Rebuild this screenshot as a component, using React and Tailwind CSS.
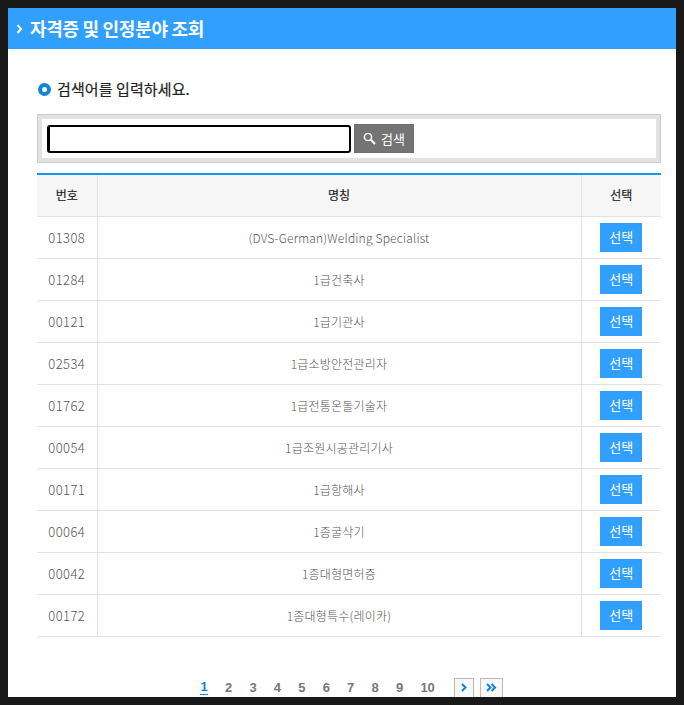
const rows = [
  ["01308", "(DVS-German)Welding Specialist"],
  ["01284", "1급건축사"],
  ["00121", "1급기관사"],
  ["02534", "1급소방안전관리자"],
  ["01762", "1급전통온돌기술자"],
  ["00054", "1급조원시공관리기사"],
  ["00171", "1급항해사"],
  ["00064", "1종굴삭기"],
  ["00042", "1종대형면허증"],
  ["00172", "1종대형특수(레이카)"],
];
const pages = ["2", "3", "4", "5", "6", "7", "8", "9", "10"];

export default function App() {
  return (
    <div className="h-[705px] overflow-hidden bg-[#191919] p-2 [font-family:'Noto_Sans_CJK_KR','Noto_Sans',sans-serif]">
      <div className="h-[689px] overflow-hidden bg-white">
        <div className="flex h-[41px] items-center gap-[7px] bg-[#319ffe] pl-[8px] text-white">
          <svg width="7" height="10" viewBox="0 0 7 10" fill="none" stroke="white" strokeWidth="2"><path d="M1.5 1l3.5 4-3.5 4" /></svg>
          <h1 className="-mt-[2px] text-[18px] leading-none font-bold tracking-[-0.3px]">자격증 및 인정분야 조회</h1>
        </div>
        <div className="pt-[29px] pr-[15px] pl-[29px]">
          <div className="flex h-[22px] items-center gap-[6px] pl-[1px]">
            <span className="h-[13px] w-[13px] rounded-full border-[4px] border-[#0f86d9] bg-white" />
            <span className="-mt-[2px] text-[15px] leading-none tracking-[0.1px] text-[#222] [-webkit-text-stroke:0.2px_#222]">검색어를 입력하세요.</span>
          </div>
          <div className="mt-[14px] h-[49px] border border-[#cccccc] bg-white">
            <div className="h-full border-[4px] border-[#e2e2e2] bg-white pt-[5px] pl-[5px]">
              <div className="flex items-start gap-[3px]">
                <input aria-label="검색어" className="mt-[1px] h-[28px] w-[304px] rounded-[3px] border-2 border-l-[3px] border-black bg-white outline-none" />
                <button className="flex h-[29px] w-[60px] items-center justify-center gap-[5px] border border-[#6f6f6f] bg-[#747474] text-[13px] text-white">
                  <svg width="13" height="13" viewBox="0 0 13 13" fill="none" stroke="white" strokeWidth="1.5"><circle cx="5" cy="5" r="3.6" /><path d="M7.8 7.8L12 12" strokeWidth="2" /></svg>
                  검색
                </button>
              </div>
            </div>
          </div>
          <table className="mt-[10px] w-[624px] table-fixed border-collapse border-t-2 border-[#1a96ef] text-[12px]">
            <colgroup>
              <col className="w-[60px]" />
              <col className="w-[484px]" />
              <col className="w-[80px]" />
            </colgroup>
            <thead>
              <tr className="h-[42px] bg-[#f6f6f6] text-[#222]">
                <th className="border-r border-b border-[#e2e2e2] font-normal [-webkit-text-stroke:0.2px_#222]">번호</th>
                <th className="border-r border-b border-[#e2e2e2] font-normal [-webkit-text-stroke:0.2px_#222]">명칭</th>
                <th className="border-b border-[#e2e2e2] font-normal [-webkit-text-stroke:0.2px_#222]">선택</th>
              </tr>
            </thead>
            <tbody>
              {rows.map(([code, name]) => (
                <tr key={code} className="h-[42px] text-center text-[#555]">
                  <td className="border-r border-b border-[#e2e2e2] pt-[2px] text-[13px] font-light tracking-[0.4px]">{code}</td>
                  <td className="border-r border-b border-[#e2e2e2] pt-[2px] font-light tracking-[0.2px]">{name}</td>
                  <td className="border-b border-[#e2e2e2]">
                    <button className="h-[29px] w-[42px] bg-[#319ffe] text-[13px] text-white">선택</button>
                  </td>
                </tr>
              ))}
            </tbody>
          </table>
          <nav className="mt-[41px] flex h-[20px] items-center pl-[163px] [font-family:'Liberation_Sans',sans-serif] text-[13px] font-bold text-[#777]">
            <a className="w-[8px] border-b border-[#0f86d9] text-center leading-[14px] text-[#0f86d9]">1</a>
            <div className="ml-[17px] flex gap-[17.2px]">
              {pages.map((p) => <a key={p}>{p}</a>)}
            </div>
            <button aria-label="다음" className="ml-[19px] flex h-[20px] w-[20px] items-center justify-center border border-[#bbbbbb] bg-[#f8f8f8]">
              <svg width="8" height="9" viewBox="0 0 8 9" fill="none" stroke="#0f86d9" strokeWidth="2"><path d="M2 1l3.500 3.500L2 8" /></svg>
            </button>
            <button aria-label="마지막" className="ml-[6px] flex h-[20px] w-[23px] items-center justify-center border border-[#bbbbbb] bg-[#f8f8f8]">
              <svg width="11" height="9" viewBox="0 0 11 9" fill="none" stroke="#0f86d9" strokeWidth="2"><path d="M1 1l3.500 3.500L1 8M5.500 1L9 4.500 5.500 8" /></svg>
            </button>
          </nav>
        </div>
      </div>
    </div>
  );
}
